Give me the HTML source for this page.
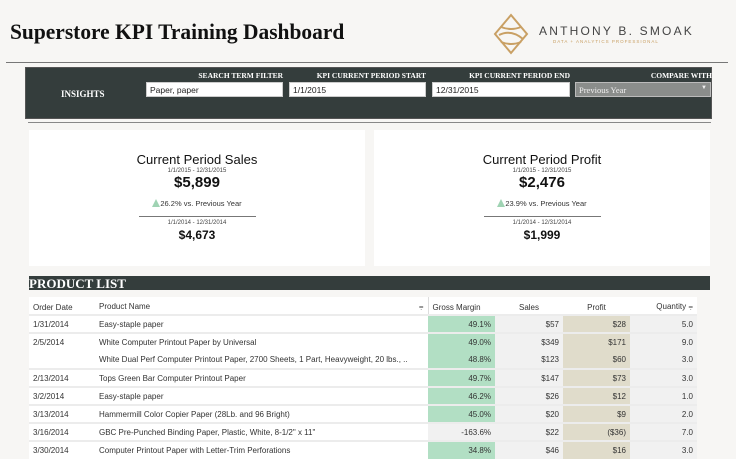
<!DOCTYPE html>
<html><head><style>
*{margin:0;padding:0;box-sizing:border-box}
body{width:736px;height:454px;overflow:hidden;background:#f7f6f4;font-family:"Liberation Sans",sans-serif;position:relative}
.abs{position:absolute}
.title{left:10px;top:19px;font-family:"Liberation Serif",serif;font-weight:bold;font-size:22px;color:#111;transform:scaleX(0.975);transform-origin:left}
.bar{left:25px;top:67px;width:687px;height:52px;background:#343d3c;border:1px solid #555}
.lbl{font-family:"Liberation Serif",serif;font-weight:bold;font-size:7.5px;color:#fff;white-space:nowrap;text-align:right;width:140px}
.inp{background:#fff;height:15px;font-size:8.5px;padding:2px 3px;color:#222;border:1px solid #ccc}
.card{background:#fff;top:130px;width:336px;height:136px;text-align:center;font-family:"Liberation Sans",sans-serif;color:#111}
.card .h{margin-top:22px;font-size:13px}
.card .d{font-size:6px;color:#444;margin-top:1px}
.card .big{font-size:15px;font-weight:bold;margin-top:0px}
.card .ch{font-size:7.5px;margin-top:8px;color:#333}
.tri{display:inline-block;width:0;height:0;border-left:4px solid transparent;border-right:4px solid transparent;border-bottom:8px solid #9fd3b3;vertical-align:-1px}
.card hr{border:0;border-top:1px solid #777;width:117px;margin:8px auto 3px}
.card .big2{font-size:12px;font-weight:bold;margin-top:2px}
table{position:absolute;left:29px;top:297px;border-collapse:collapse;font-size:8px;color:#333;width:668px}
td{height:18px;padding:0 4px;white-space:nowrap}
tr.sep td{border-top:2px solid #ececec;height:18px}
.gm{background:#b2dfc4;text-align:right}
.sa{background:#f1f1f1;text-align:right}
.pr{background:#e0dccb;text-align:right}
.qt{background:#f1f1f1;text-align:right}
</style></head><body>
<div class="abs title">Superstore KPI Training Dashboard</div>
<svg class="abs" style="left:493px;top:13px" width="36" height="42" viewBox="0 0 36 42"><g fill="none" stroke="#c9a064" stroke-width="2"><path d="M18 2 L34 21 L18 40 L2 21 Z"/><path d="M8 14 Q18 18 28 14"/><path d="M6 22 Q18 16 30 26"/><path d="M8 29 Q18 33 28 29"/></g></svg>
<div class="abs" style="left:539px;top:24px;font-size:12px;letter-spacing:2.2px;color:#444">ANTHONY B. SMOAK</div>
<div class="abs" style="left:553px;top:39px;font-size:4.5px;letter-spacing:1px;color:#c9a064">DATA + ANALYTICS PROFESSIONAL</div>
<div class="abs" style="left:6px;top:62px;width:722px;border-top:1px solid #777"></div>
<div class="abs bar">
 <div class="abs lbl" style="left:35px;top:21px;font-size:9px;text-align:left">INSIGHTS</div>
 <div class="abs lbl" style="left:117px;top:3px">SEARCH TERM FILTER</div>
 <div class="abs lbl" style="left:260px;top:3px">KPI CURRENT PERIOD START</div>
 <div class="abs lbl" style="left:404px;top:3px">KPI CURRENT PERIOD END</div>
 <div class="abs lbl" style="left:546px;top:3px">COMPARE WITH</div>
 <div class="abs inp" style="left:120px;top:14px;width:137px">Paper, paper</div>
 <div class="abs inp" style="left:263px;top:14px;width:137px">1/1/2015</div>
 <div class="abs inp" style="left:406px;top:14px;width:138px">12/31/2015</div>
 <div class="abs inp" style="left:549px;top:14px;width:136px;background:#8a8d8b;color:#eee;font-family:'Liberation Serif',serif;border-color:#bbb">Previous Year<span style="float:right;font-size:6px">▼</span></div>
</div>
<div class="abs" style="left:28px;top:122px;width:683px;border-top:1px solid #888"></div>
<div class="abs card" style="left:29px"><div class="h">Current Period Sales</div><div class="d">1/1/2015 - 12/31/2015</div><div class="big">$5,899</div><div class="ch"><span class="tri"></span>26.2% vs. Previous Year</div><hr><div class="d">1/1/2014 - 12/31/2014</div><div class="big2">$4,673</div></div>
<div class="abs card" style="left:374px"><div class="h">Current Period Profit</div><div class="d">1/1/2015 - 12/31/2015</div><div class="big">$2,476</div><div class="ch"><span class="tri"></span>23.9% vs. Previous Year</div><hr><div class="d">1/1/2014 - 12/31/2014</div><div class="big2">$1,999</div></div>
<div class="abs" style="left:29px;top:276px;width:681px;height:14px;background:#343d3c;color:#fff;font-family:'Liberation Serif',serif;font-weight:bold;font-size:13px;line-height:15px">PRODUCT LIST</div>
<table>
<colgroup><col style="width:66px"><col style="width:333px"><col style="width:67px"><col style="width:68px"><col style="width:67px"><col style="width:67px"></colgroup>
<tr style="background:#fff"><td style="height:17px;padding-top:3px">Order Date</td><td style="padding-top:3px">Product Name<span style="float:right">⩦</span></td><td style="border-left:1px solid #ddd;padding-top:3px">Gross Margin</td><td style="text-align:center;padding-top:3px">Sales</td><td style="text-align:center;padding-top:3px">Profit</td><td style="text-align:right;padding-top:3px">Quantity ⩦</td></tr>
<tr class="sep" style="background:#fff"><td>1/31/2014</td><td>Easy-staple paper</td><td class="gm">49.1%</td><td class="sa">$57</td><td class="pr">$28</td><td class="qt">5.0</td></tr>
<tr class="sep" style="background:#fff"><td>2/5/2014</td><td>White Computer Printout Paper by Universal</td><td class="gm">49.0%</td><td class="sa">$349</td><td class="pr">$171</td><td class="qt">9.0</td></tr>
<tr style="background:#fff"><td></td><td>White Dual Perf Computer Printout Paper, 2700 Sheets, 1 Part, Heavyweight, 20 lbs., ..</td><td class="gm">48.8%</td><td class="sa">$123</td><td class="pr">$60</td><td class="qt">3.0</td></tr>
<tr class="sep" style="background:#fff"><td>2/13/2014</td><td>Tops Green Bar Computer Printout Paper</td><td class="gm">49.7%</td><td class="sa">$147</td><td class="pr">$73</td><td class="qt">3.0</td></tr>
<tr class="sep" style="background:#fff"><td>3/2/2014</td><td>Easy-staple paper</td><td class="gm">46.2%</td><td class="sa">$26</td><td class="pr">$12</td><td class="qt">1.0</td></tr>
<tr class="sep" style="background:#fff"><td>3/13/2014</td><td>Hammermill Color Copier Paper (28Lb. and 96 Bright)</td><td class="gm">45.0%</td><td class="sa">$20</td><td class="pr">$9</td><td class="qt">2.0</td></tr>
<tr class="sep" style="background:#fff"><td>3/16/2014</td><td>GBC Pre-Punched Binding Paper, Plastic, White, 8-1/2" x 11"</td><td class="sa">-163.6%</td><td class="sa">$22</td><td class="pr">($36)</td><td class="qt">7.0</td></tr>
<tr class="sep" style="background:#fff"><td>3/30/2014</td><td>Computer Printout Paper with Letter-Trim Perforations</td><td class="gm">34.8%</td><td class="sa">$46</td><td class="pr">$16</td><td class="qt">3.0</td></tr>
</table>
</body></html>
